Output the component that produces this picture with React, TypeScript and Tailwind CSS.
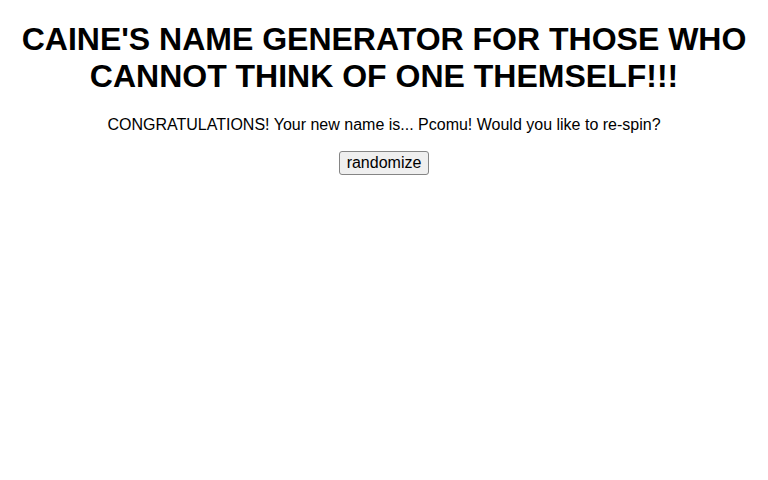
import React, { useState } from "react";

const NAMES = ["Pcomu", "Zooble", "Gangle", "Kinger", "Ragatha", "Jax", "Pomni", "Bubble"];

export default function App() {
  const [name, setName] = useState("Pcomu");

  const spin = () => {
    setName(NAMES[Math.floor(Math.random() * NAMES.length)]);
  };

  return (
    <div className="min-h-screen bg-white px-2 pt-[21.44px] text-center text-black font-['Liberation_Sans',Arial,sans-serif]">
      <h1 className="text-[32px] font-bold leading-[36.8px]">
        CAINE'S NAME GENERATOR FOR THOSE WHO CANNOT THINK OF ONE THEMSELF!!!
      </h1>
      <p className="mt-[21.44px] text-[16px] leading-[18.4px]">
        CONGRATULATIONS! Your new name is... {name}! Would you like to re-spin?
      </p>
      <button
        onClick={spin}
        className="mt-4 rounded-[3px] border border-[#858585] bg-[#efefef] px-[7px] py-[2px] text-[16px] leading-[18.4px] text-black hover:bg-[#e5e5e5]"
      >
        randomize
      </button>
    </div>
  );
}
